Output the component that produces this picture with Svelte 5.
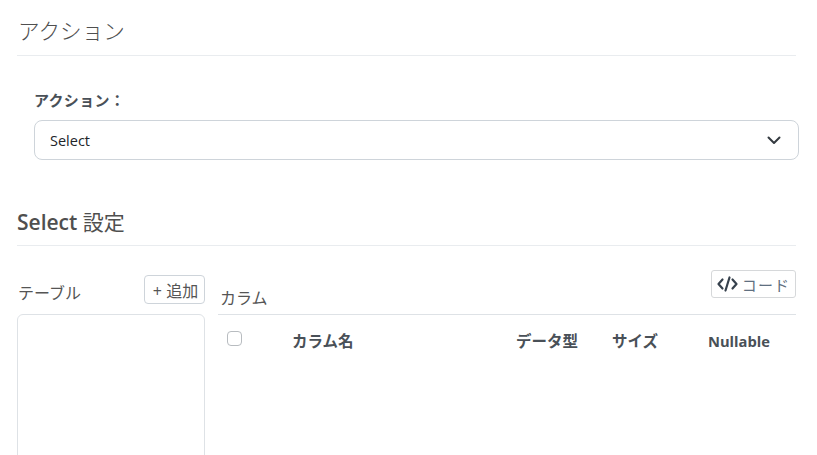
<script>
  const columns = [
    { name: 'カラム名', width: 224, latin: false },
    { name: 'データ型', width: 96, latin: false },
    { name: 'サイズ', width: 96, latin: false },
    { name: 'Nullable', width: 88, latin: true }
  ];
</script>

<div class="page">
  <h2 class="title light">アクション</h2>
  <div class="field">
    <div class="label">アクション：</div>
    <div class="select">
      <span class="value">Select</span>
      <svg width="14" height="9" viewBox="0 0 14 9"><path d="M1.5 1.5 7 7l5.5-5.5" fill="none" stroke="#343a40" stroke-width="2" stroke-linecap="round" stroke-linejoin="round"/></svg>
    </div>
  </div>
  <h2 class="title strong"><span class="latin">Select</span> 設定</h2>
  <div class="columns">
    <section class="left">
      <div class="left-head">
        <span class="name">テーブル</span>
        <button class="btn add">+ 追加</button>
      </div>
      <div class="tables"></div>
    </section>
    <section class="right">
      <div class="right-head">
        <span class="name">カラム</span>
        <button class="btn code">
          <svg width="21" height="16" viewBox="0 0 21 16"><path d="M5.500 3.500 1.500 8l4 4.500M15.500 3.500l4 4.500-4 4.500M12.500 1.500l-4 13" fill="none" stroke="#36414d" stroke-width="2.200" stroke-linecap="round" stroke-linejoin="round"/></svg>
          <span>コード</span>
        </button>
      </div>
      <div class="thead">
        <div class="check-cell"><span class="check"></span></div>
        {#each columns as c}
          <div class="th" class:th-latin={c.latin} style="width: {c.width}px">{c.name}</div>
        {/each}
      </div>
    </section>
  </div>
</div>

<style>
  :global(body) { margin: 0; background: #fff; }
  .page {
    box-sizing: border-box;
    width: 817px;
    height: 455px;
    overflow: hidden;
    padding: 0 21px 0 17px;
    font-family: "Open Sans", "Noto Sans CJK JP", sans-serif;
    color: #495057;
  }
  .title {
    margin: 0;
    border-bottom: 1px solid #e9ecef;
    color: #4f4f4f;
    font-family: "Open Sans", "Noto Sans CJK JP", sans-serif;
  }
  .light {
    height: 55px;
    box-sizing: content-box;
    padding: 0 0 0 1px;
    font-size: 21.6px;
    font-weight: 300;
    line-height: 62px;
  }
  .strong {
    height: 40px;
    font-size: 21px;
    font-weight: 400;
    line-height: 34px;
    margin-top: 45px;
  }
  .latin { font-weight: 600; }
  .field { padding: 35px 0 0 17px; margin-right: -3px; }
  .label { font-size: 15px; font-weight: 700; line-height: 19px; height: 29px; color: #495057; letter-spacing: 0.3px; }
  .select {
    box-sizing: border-box;
    height: 40px;
    border: 1px solid #ced4da;
    border-radius: 8px;
    padding: 0 17px 0 15px;
    display: flex;
    align-items: center;
    justify-content: space-between;
    font-size: 14.5px;
    color: #212529;
  }
  .value { padding-top: 1px; }
  .columns { display: flex; gap: 13px; }
  .left { width: 188px; flex: none; }
  .left-head {
    height: 68px;
    display: flex;
    justify-content: space-between;
    align-items: flex-start;
    padding-top: 29px;
    box-sizing: border-box;
  }
  .name { font-size: 16px; font-weight: 400; color: #555; line-height: 36px; padding-left: 1px; }
  .btn {
    box-sizing: border-box;
    background: #fff;
    border: 1px solid #ced4da;
    border-radius: 4px;
    font-family: inherit;
    padding: 0;
    display: inline-flex;
    align-items: center;
    justify-content: center;
  }
  .add { width: 61px; height: 29px; font-size: 16px; color: #555; padding-left: 2px; }
  .tables {
    height: 200px;
    border: 1px solid #dee2e6;
    border-radius: 6px;
  }
  .right { flex: 1; min-width: 0; }
  .right-head {
    box-sizing: border-box;
    height: 69px;
    padding-top: 24px;
    display: flex;
    justify-content: space-between;
    align-items: flex-start;
    border-bottom: 1px solid #dee2e6;
  }
  .right-head .name { padding: 11px 0 0 2px; line-height: 34px; }
  .code { width: 85px; height: 28px; gap: 4px; color: #5f6f80; font-size: 15px; letter-spacing: 1.2px; border-radius: 3px; border-color: #d6d8da; }
  .thead { display: flex; align-items: flex-start; height: 52px; }
  .check-cell { width: 74px; flex: none; padding: 16px 0 0 9px; box-sizing: border-box; display: flex; }
  .check {
    box-sizing: border-box;
    width: 15px;
    height: 15px;
    border: 1px solid #b8bcc0;
    border-radius: 4px;
  }
  .th { flex: none; font-size: 15.5px; font-weight: 700; color: #495057; line-height: 20px; padding-top: 16px; }
  .th-latin { font-size: 14.7px; }
</style>
